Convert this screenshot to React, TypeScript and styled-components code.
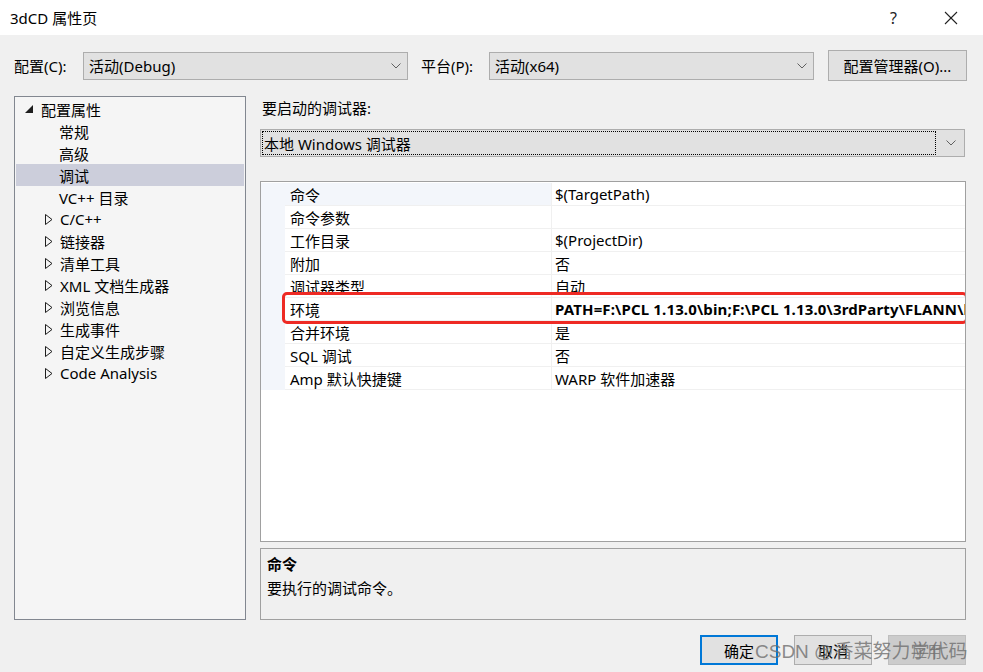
import React from 'react';
import styled, { createGlobalStyle } from 'styled-components';

const GlobalStyle = createGlobalStyle`
  html, body {
    margin: 0;
    padding: 0;
    background: #f0f0f0;
  }
  body {
    font-family: "Noto Sans", "Noto Sans CJK SC", sans-serif;
    font-size: 15px;
    color: #000;
  }
`;

const Window = styled.div`
  width: 983px;
  height: 672px;
  display: flex;
  flex-direction: column;
  background: #f0f0f0;
  position: relative;
  overflow: hidden;
`;

const TitleBar = styled.div`
  height: 35px;
  flex: none;
  background: #fff;
  display: flex;
  align-items: center;
  padding: 0 4px 0 10px;
`;

const Title = styled.div`
  flex: 1;
  font-size: 15px;
`;

const TitleButton = styled.div`
  width: 57px;
  height: 35px;
  display: flex;
  align-items: center;
  justify-content: center;
  font-size: 16px;
  color: #222;
`;

const Body = styled.div`
  flex: 1;
  display: flex;
  flex-direction: column;
  padding: 15px 16px 0 14px;
`;

const ConfigRow = styled.div`
  display: flex;
  align-items: center;
  height: 31px;
`;

const FieldLabel = styled.span<{ $w: number; $pad?: number }>`
  width: ${(p) => p.$w}px;
  padding-left: ${(p) => p.$pad ?? 0}px;
  box-sizing: border-box;
  flex: none;
  white-space: nowrap;
`;

const Combo = styled.div<{ $w: number }>`
  width: ${(p) => p.$w}px;
  height: 28px;
  box-sizing: border-box;
  flex: none;
  background: #e1e1e1;
  border: 1px solid #adadad;
  display: flex;
  align-items: center;
  padding: 0 6px 0 3px;
`;

const ComboText = styled.div<{ $focus?: boolean }>`
  flex: 1;
  height: 22px;
  display: flex;
  align-items: center;
  padding-left: 1px;
  white-space: nowrap;
  border: 1px dotted ${(p) => (p.$focus ? '#000' : 'transparent')};
`;

const ChevronBox = styled.span`
  width: 20px;
  display: flex;
  justify-content: flex-end;
`;

const Button = styled.button<{ $default?: boolean; $disabled?: boolean }>`
  height: 30px;
  width: 78px;
  box-sizing: border-box;
  font: inherit;
  background: ${(p) => (p.$disabled ? '#cccccc' : '#e1e1e1')};
  color: ${(p) => (p.$disabled ? '#838383' : '#000')};
  border: ${(p) => (p.$default ? '2px solid #0078d7' : p.$disabled ? '1px solid #bfbfbf' : '1px solid #adadad')};
  padding: 0;
`;

const ManagerButton = styled(Button)`
  width: 139px;
  height: 31px;
  margin-left: 14px;
`;

const Main = styled.div`
  display: flex;
  gap: 14px;
  margin-top: 15px;
`;

const Tree = styled.div`
  width: 232px;
  height: 524px;
  box-sizing: border-box;
  border: 1px solid #828790;
  background: #f5f5f5;
  padding: 1px 1px 0 1px;
`;

const TreeRow = styled.div<{ $indent: number; $selected?: boolean }>`
  height: 22px;
  display: flex;
  align-items: center;
  padding-left: ${(p) => p.$indent}px;
  background: ${(p) => (p.$selected ? '#cccedb' : 'transparent')};
  white-space: nowrap;
`;

const Arrow = styled.span<{ $w: number }>`
  width: ${(p) => p.$w}px;
  flex: none;
  display: flex;
  align-items: center;
`;

const RightPane = styled.div`
  width: 706px;
  display: flex;
  flex-direction: column;
`;

const SectionLabel = styled.div`
  height: 22px;
  display: flex;
  align-items: center;
  padding-left: 2px;
`;

const DebuggerCombo = styled(Combo)`
  margin-top: 11px;
  padding: 0 8px 0 1px;
`;

const Grid = styled.div`
  position: relative;
  margin-top: 24px;
  height: 361px;
  box-sizing: border-box;
  border: 1px solid #a0a0a0;
  background: #fff;
  padding-top: 1px;
  overflow: hidden;
`;

const GridRow = styled.div`
  display: flex;
  height: 23px;
`;

const Gutter = styled.div`
  width: 24px;
  flex: none;
  background: #f3f6fb;
`;

const NameCell = styled.div<{ $selected?: boolean }>`
  width: 267px;
  flex: none;
  box-sizing: border-box;
  padding-left: 5px;
  display: flex;
  align-items: center;
  border-bottom: 1px solid #f0f0f0;
  border-right: 1px solid #f0f0f0;
  background: ${(p) => (p.$selected ? '#f3f6fb' : '#fff')};
  white-space: nowrap;
`;

const ValueCell = styled.div<{ $bold?: boolean }>`
  flex: 1;
  min-width: 0;
  box-sizing: border-box;
  padding-left: 3px;
  display: flex;
  align-items: center;
  border-bottom: 1px solid #f0f0f0;
  font-weight: ${(p) => (p.$bold ? 700 : 400)};
  letter-spacing: ${(p) => (p.$bold ? '0.15px' : 'normal')};
  white-space: nowrap;
  overflow: hidden;
`;

const Highlight = styled.div`
  position: absolute;
  left: 21px;
  top: 110px;
  width: 686px;
  height: 32px;
  box-sizing: border-box;
  border: 3px solid #ee2a24;
  border-radius: 5px;
  pointer-events: none;
`;

const Description = styled.div`
  margin-top: 6px;
  height: 72px;
  box-sizing: border-box;
  border: 1px solid #a0a0a0;
  padding: 3px 6px;
  display: flex;
  flex-direction: column;
  gap: 2px;
`;

const DescTitle = styled.div`
  font-weight: 700;
  height: 22px;
  display: flex;
  align-items: center;
`;

const DescText = styled.div`
  height: 22px;
  display: flex;
  align-items: center;
`;

const Footer = styled.div`
  display: flex;
  justify-content: flex-end;
  gap: 16px;
  margin-top: 15px;
`;

const Watermark = styled.div`
  position: absolute;
  left: 755px;
  top: 636px;
  display: flex;
  align-items: baseline;
  color: rgba(110, 110, 110, 0.8);
  white-space: nowrap;
  pointer-events: none;
`;

const WatermarkLatin = styled.span`
  font-family: "Liberation Sans", sans-serif;
  font-size: 19px;
  margin-right: 1px;
`;

const WatermarkCjk = styled.span`
  font-family: "Noto Sans CJK SC", sans-serif;
  font-size: 19px;
`;

const Chevron = () => (
  <svg width="10" height="6" viewBox="0 0 10 6">
    <polyline points="0.5,0.5 5,5 9.5,0.5" fill="none" stroke="#606060" strokeWidth="1" />
  </svg>
);

const Expanded = () => (
  <svg width="8" height="8" viewBox="0 0 8 8">
    <polygon points="0,8 8,8 8,0" fill="#1e1e1e" />
  </svg>
);

const Collapsed = () => (
  <svg width="8" height="11" viewBox="0 0 8 11">
    <polygon points="0.5,0.5 7,5.5 0.5,10.5" fill="none" stroke="#1e1e1e" strokeWidth="1" />
  </svg>
);

const CloseIcon = () => (
  <svg width="14" height="14" viewBox="0 0 14 14">
    <line x1="1" y1="1" x2="13" y2="13" stroke="#222" strokeWidth="1.1" />
    <line x1="13" y1="1" x2="1" y2="13" stroke="#222" strokeWidth="1.1" />
  </svg>
);

type TreeItem = { label: string; kind: 'root' | 'leaf' | 'group'; selected?: boolean };

const treeItems: TreeItem[] = [
  { label: '配置属性', kind: 'root' },
  { label: '常规', kind: 'leaf' },
  { label: '高级', kind: 'leaf' },
  { label: '调试', kind: 'leaf', selected: true },
  { label: 'VC++ 目录', kind: 'leaf' },
  { label: 'C/C++', kind: 'group' },
  { label: '链接器', kind: 'group' },
  { label: '清单工具', kind: 'group' },
  { label: 'XML 文档生成器', kind: 'group' },
  { label: '浏览信息', kind: 'group' },
  { label: '生成事件', kind: 'group' },
  { label: '自定义生成步骤', kind: 'group' },
  { label: 'Code Analysis', kind: 'group' },
];

const properties = [
  { name: '命令', value: '$(TargetPath)' },
  { name: '命令参数', value: '' },
  { name: '工作目录', value: '$(ProjectDir)' },
  { name: '附加', value: '否' },
  { name: '调试器类型', value: '自动' },
  { name: '环境', value: 'PATH=F:\\PCL 1.13.0\\bin;F:\\PCL 1.13.0\\3rdParty\\FLANN\\bin;F:\\PCL 1.13.0\\3rdParty\\VTK\\bin', bold: true },
  { name: '合并环境', value: '是' },
  { name: 'SQL 调试', value: '否' },
  { name: 'Amp 默认快捷键', value: 'WARP 软件加速器' },
];

const App: React.FC = () => {
  return (
    <>
      <GlobalStyle />
      <Window>
        <TitleBar>
          <Title>3dCD 属性页</Title>
          <TitleButton>?</TitleButton>
          <TitleButton>
            <CloseIcon />
          </TitleButton>
        </TitleBar>

        <Body>
          <ConfigRow>
            <FieldLabel $w={69}>配置(C):</FieldLabel>
            <Combo $w={325}>
              <ComboText>活动(Debug)</ComboText>
              <ChevronBox><Chevron /></ChevronBox>
            </Combo>
            <FieldLabel $w={81} $pad={13}>平台(P):</FieldLabel>
            <Combo $w={325}>
              <ComboText>活动(x64)</ComboText>
              <ChevronBox><Chevron /></ChevronBox>
            </Combo>
            <ManagerButton>配置管理器(O)...</ManagerButton>
          </ConfigRow>

          <Main>
            <Tree>
              {treeItems.map((item) => (
                <TreeRow
                  key={item.label}
                  $indent={item.kind === 'root' ? 9 : item.kind === 'group' ? 29 : 43}
                  $selected={item.selected}
                >
                  {item.kind === 'root' && (
                    <Arrow $w={16}><Expanded /></Arrow>
                  )}
                  {item.kind === 'group' && (
                    <Arrow $w={15}><Collapsed /></Arrow>
                  )}
                  {item.label}
                </TreeRow>
              ))}
            </Tree>

            <RightPane>
              <SectionLabel>要启动的调试器:</SectionLabel>
              <DebuggerCombo $w={705}>
                <ComboText $focus>本地 Windows 调试器</ComboText>
                <ChevronBox><Chevron /></ChevronBox>
              </DebuggerCombo>

              <Grid>
                {properties.map((prop, i) => (
                  <GridRow key={prop.name}>
                    <Gutter />
                    <NameCell $selected={i === 0}>{prop.name}</NameCell>
                    <ValueCell $bold={prop.bold}>{prop.value}</ValueCell>
                  </GridRow>
                ))}
                <Highlight />
              </Grid>

              <Description>
                <DescTitle>命令</DescTitle>
                <DescText>要执行的调试命令。</DescText>
              </Description>

              <Footer>
                <Button $default>确定</Button>
                <Button>取消</Button>
                <Button $disabled>应用</Button>
              </Footer>
            </RightPane>
          </Main>
        </Body>

        <Watermark>
          <WatermarkLatin>CSDN @</WatermarkLatin>
          <WatermarkCjk>香菜努力学代码</WatermarkCjk>
        </Watermark>
      </Window>
    </>
  );
};

export default App;
